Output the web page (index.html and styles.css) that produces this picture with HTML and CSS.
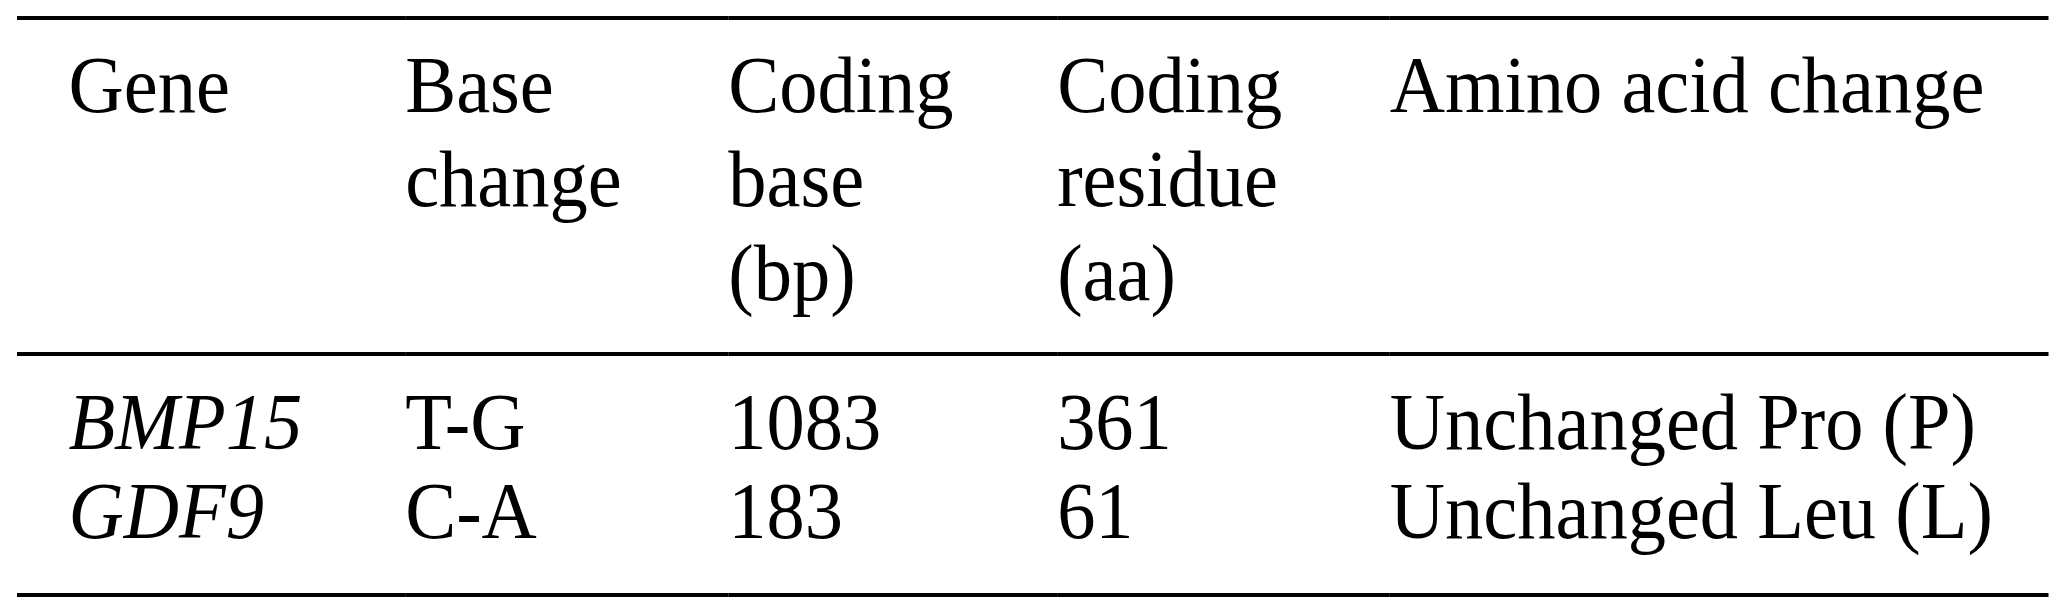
FILE: index.html
```html
<!DOCTYPE html>
<html>
<head>
<meta charset="utf-8">
<link rel="stylesheet" href="styles.css">
</head>
<body>
<div class="page">
  <table class="data">
    <thead>
      <tr>
        <th>Gene</th>
        <th>Base<br>change</th>
        <th>Coding<br>base<br>(bp)</th>
        <th>Coding<br>residue<br>(aa)</th>
        <th>Amino acid change</th>
      </tr>
    </thead>
    <tbody>
      <tr class="first">
        <td><i>BMP15</i></td>
        <td>T-G</td>
        <td>1083</td>
        <td>361</td>
        <td>Unchanged Pro (P)</td>
      </tr>
      <tr class="last">
        <td><i>GDF9</i></td>
        <td>C-A</td>
        <td>183</td>
        <td>61</td>
        <td>Unchanged Leu (L)</td>
      </tr>
    </tbody>
  </table>
</div>
</body>
</html>
```
FILE: styles.css
```css
html, body {
  margin: 0;
  padding: 0;
  background: #ffffff;
  overflow: hidden;
}
.page {
  padding: 16px 0 0 17px;
  width: 2050px;
  overflow: hidden;
}
.data {
  width: 2125px;
  border-collapse: collapse;
  table-layout: fixed;
  font-family: "Liberation Serif", "Times New Roman", serif;
  font-size: 80px;
  line-height: 94px;
  color: #000;
  border-top: 4px solid #000;
  border-bottom: 4px solid #000;
  transform: scaleX(0.956);
  transform-origin: 0 0;
}
.data th, .data td {
  text-align: left;
  font-weight: normal;
  vertical-align: top;
  padding: 0;
  white-space: nowrap;
}
.data th:nth-child(1), .data td:nth-child(1) { width: 352px; padding-left: 54px; }
.data th:nth-child(2), .data td:nth-child(2) { width: 338px; }
.data th:nth-child(3), .data td:nth-child(3) { width: 344px; }
.data th:nth-child(4), .data td:nth-child(4) { width: 348px; }
.data thead th {
  padding-top: 18px;
  padding-bottom: 32px;
  border-bottom: 4px solid #000;
}
.data tbody td { line-height: 89px; }
.data tbody tr.first td { padding-top: 22px; }
.data tbody tr.last td { padding-bottom: 37px; }
.data i { font-style: italic; }
```
